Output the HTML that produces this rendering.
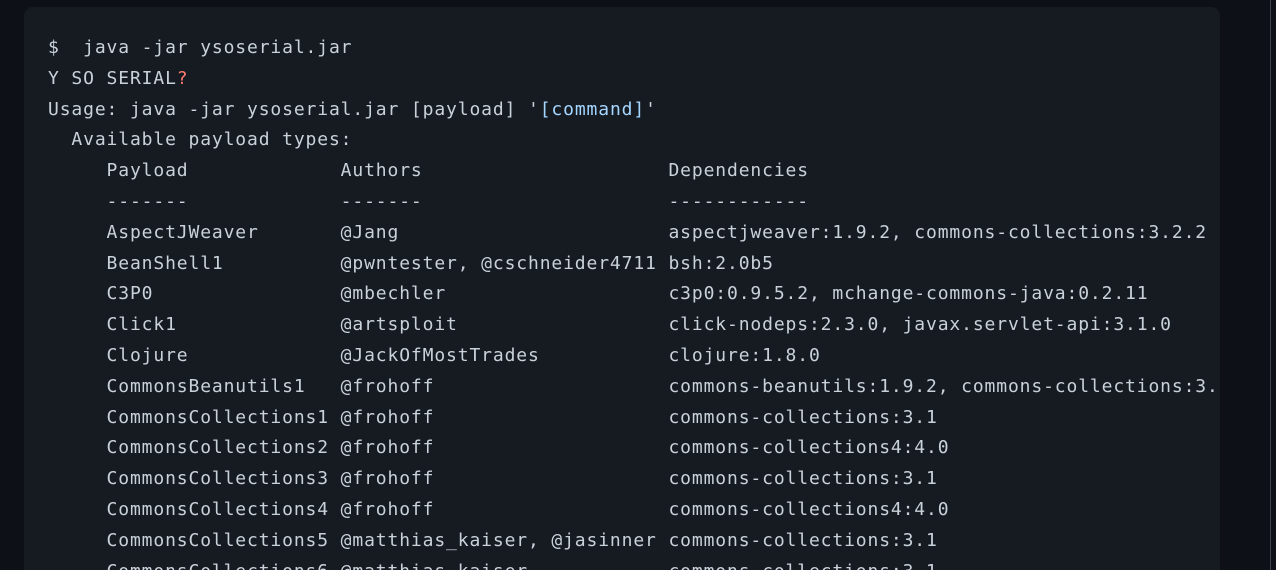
<!DOCTYPE html>
<html><head><meta charset="utf-8"><style>
html,body{margin:0;padding:0;background:#0d1117;width:1276px;height:570px;overflow:hidden;position:relative}
.blk{position:absolute;left:24px;top:7px;width:1196px;height:563px;background:#161b22;border-radius:9px 9px 0 0;overflow:hidden}
pre{margin:0;position:absolute;left:24px;top:26px;font-family:"DejaVu Sans Mono","Liberation Mono",monospace;font-size:18px;letter-spacing:0.87px;line-height:30.8px;color:#c9d1d9;white-space:pre}
.r{color:#ff7b72}.b{color:#a5d6ff}
.vl{position:absolute;left:1270px;top:0;width:1px;height:570px;background:#3d434b}
</style></head><body>
<div class="blk"><pre>$  java -jar ysoserial.jar
Y SO SERIAL<span class="r">?</span>
Usage: java -jar ysoserial.jar [payload] '<span class="b">[command]</span>'
  Available payload types:
     Payload             Authors                     Dependencies
     -------             -------                     ------------
     AspectJWeaver       @Jang                       aspectjweaver:1.9.2, commons-collections:3.2.2
     BeanShell1          @pwntester, @cschneider4711 bsh:2.0b5
     C3P0                @mbechler                   c3p0:0.9.5.2, mchange-commons-java:0.2.11
     Click1              @artsploit                  click-nodeps:2.3.0, javax.servlet-api:3.1.0
     Clojure             @JackOfMostTrades           clojure:1.8.0
     CommonsBeanutils1   @frohoff                    commons-beanutils:1.9.2, commons-collections:3.1
     CommonsCollections1 @frohoff                    commons-collections:3.1
     CommonsCollections2 @frohoff                    commons-collections4:4.0
     CommonsCollections3 @frohoff                    commons-collections:3.1
     CommonsCollections4 @frohoff                    commons-collections4:4.0
     CommonsCollections5 @matthias_kaiser, @jasinner commons-collections:3.1
     CommonsCollections6 @matthias_kaiser            commons-collections:3.1
</pre></div>
<div class="vl"></div>
</body></html>
